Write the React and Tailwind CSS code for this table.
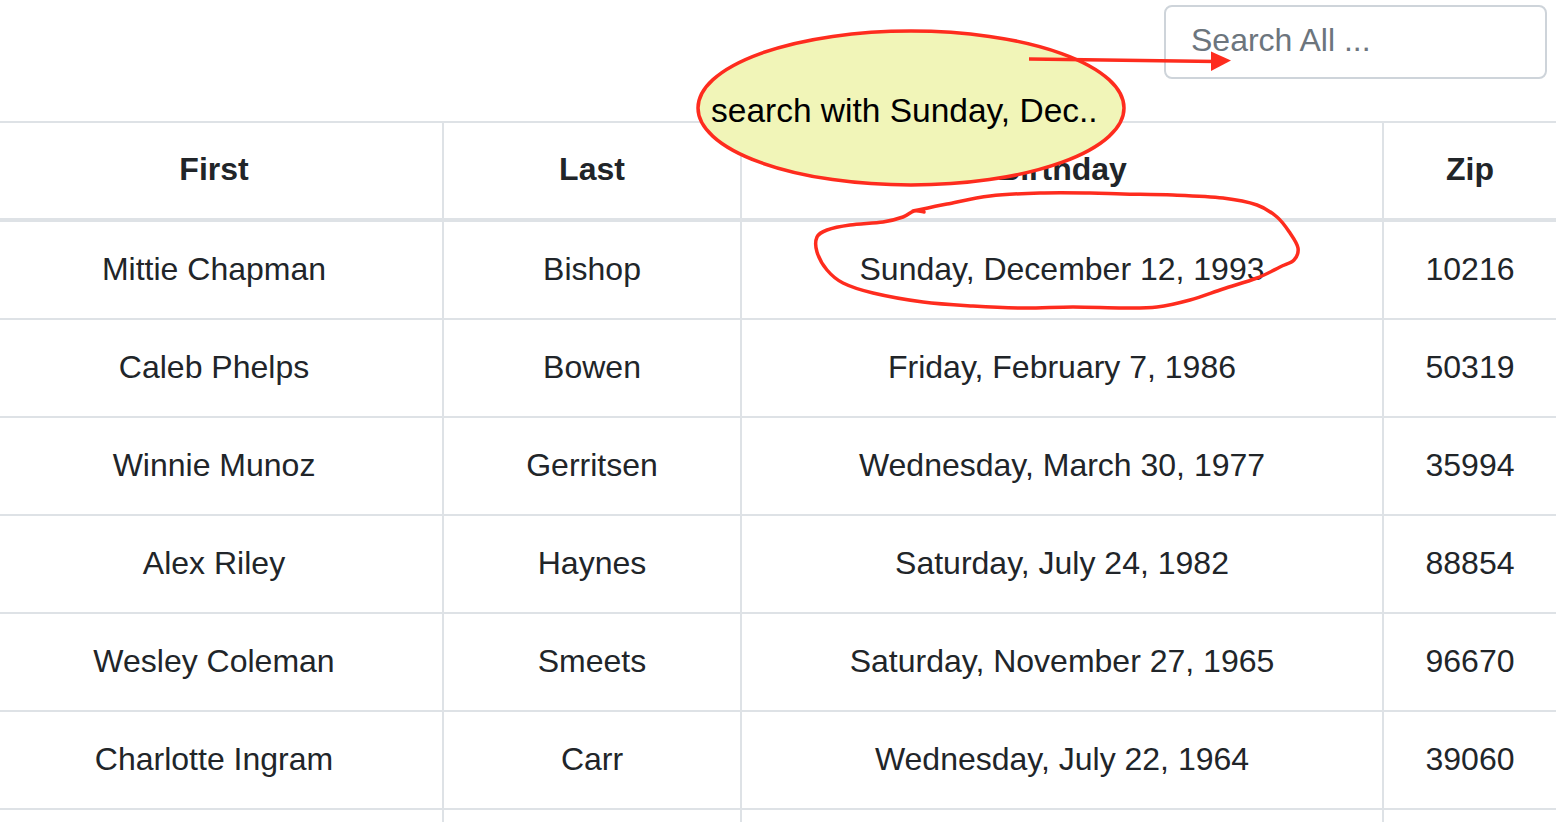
import React from 'react';

const rows = [
  ['Mittie Chapman', 'Bishop', 'Sunday, December 12, 1993', '10216'],
  ['Caleb Phelps', 'Bowen', 'Friday, February 7, 1986', '50319'],
  ['Winnie Munoz', 'Gerritsen', 'Wednesday, March 30, 1977', '35994'],
  ['Alex Riley', 'Haynes', 'Saturday, July 24, 1982', '88854'],
  ['Wesley Coleman', 'Smeets', 'Saturday, November 27, 1965', '96670'],
  ['Charlotte Ingram', 'Carr', 'Wednesday, July 22, 1964', '39060'],
  ['', '', '', ''],
];

// freehand loop around the matched date
const loop = [
  [913, 211], [947, 204], [990, 196], [1040, 193], [1090, 193], [1123, 194],
  [1173, 195], [1223, 198], [1257, 205], [1277, 217], [1290, 233], [1298, 248],
  [1294, 260], [1280, 267], [1257, 278], [1223, 289], [1190, 300], [1157, 307],
  [1123, 308], [1073, 307], [1023, 308], [973, 306], [923, 302], [873, 293],
  [843, 283], [827, 270], [817, 252], [817, 237], [827, 230], [850, 225],
  [883, 222], [903, 217], [914, 211], [924, 212],
];

const smooth = (pts) => {
  let d = `M ${pts[0][0]} ${pts[0][1]}`;
  for (let i = 0; i < pts.length - 1; i++) {
    const p0 = pts[i - 1] || pts[i];
    const p1 = pts[i];
    const p2 = pts[i + 1];
    const p3 = pts[i + 2] || p2;
    const c1 = [p1[0] + (p2[0] - p0[0]) / 6, p1[1] + (p2[1] - p0[1]) / 6];
    const c2 = [p2[0] - (p3[0] - p1[0]) / 6, p2[1] - (p3[1] - p1[1]) / 6];
    d += ` C ${c1[0]} ${c1[1]}, ${c2[0]} ${c2[1]}, ${p2[0]} ${p2[1]}`;
  }
  return d;
};

const Cell = ({ children, last, bold }) => (
  <div
    className={`flex items-center justify-center ${last ? '' : 'border-r-2 border-[#dee2e6]'} ${
      bold ? 'font-bold pb-[3px]' : 'pb-[2px]'
    }`}
  >
    {children}
  </div>
);

const Annotations = () => (
  <div className="pointer-events-none absolute inset-0">
    <svg width="1556" height="822" className="absolute left-0 top-0">
      <ellipse cx="911" cy="108" rx="213" ry="77" fill="#f1f5b8" stroke="#fe2c1e" strokeWidth="3.5" />
      <line x1="1029" y1="59" x2="1216" y2="61.5" stroke="#fe2c1e" strokeWidth="3.5" />
      <polygon points="1211,51.5 1231,60.5 1211,71" fill="#fe2c1e" />
      <path d={smooth(loop)} fill="none" stroke="#fe2c1e" strokeWidth="3.5" strokeLinecap="round" strokeLinejoin="round" />
    </svg>
    <div className="absolute left-[711px] top-[91px] text-[33.5px] leading-[40px] text-black whitespace-nowrap">
      search with Sunday, Dec..
    </div>
  </div>
);

export default function App() {
  return (
    <div
      className="relative w-[1556px] h-[822px] overflow-hidden bg-white text-[#212529]"
      style={{ fontFamily: '"Liberation Sans", Arial, sans-serif' }}
    >
      {/* search bar */}
      <div className="flex h-[121px] justify-end pr-[9px] pt-[5px]">
        <div className="flex h-[74px] w-[383px] items-center rounded-[8px] border-2 border-[#ced4da] pb-[4px] pl-[25px] text-[32px] text-[#6c757d]">
          Search All ...
        </div>
      </div>

      {/* table */}
      <div className="ml-[-14px] w-[1570px] text-[32px]">
        <div className="grid h-[101px] grid-cols-[458px_298px_642px_172px] border-t-2 border-b-4 border-[#dee2e6]">
          <Cell bold>First</Cell>
          <Cell bold>Last</Cell>
          <Cell bold>Birthday</Cell>
          <Cell bold last>Zip</Cell>
        </div>
        {rows.map((r, i) => (
          <div key={i} className="grid h-[98px] grid-cols-[458px_298px_642px_172px] border-b-2 border-[#dee2e6]">
            <Cell>{r[0]}</Cell>
            <Cell>{r[1]}</Cell>
            <Cell>{r[2]}</Cell>
            <Cell last>{r[3]}</Cell>
          </div>
        ))}
      </div>

      <Annotations />
    </div>
  );
}
